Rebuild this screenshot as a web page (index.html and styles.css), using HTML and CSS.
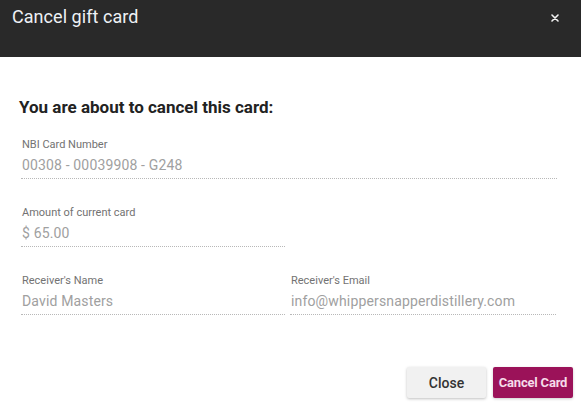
FILE: index.html
```html
<!DOCTYPE html>
<html>
<head>
<meta charset="utf-8">
<link rel="stylesheet" href="styles.css">
</head>
<body>
<div class="dialog">
  <div class="header">
    <div class="title">Cancel gift card</div>
    <button class="x" aria-label="Close">
      <svg width="8" height="8" viewBox="0 0 8 8"><path d="M1 1L7 7M7 1L1 7" stroke="#f2f2f2" stroke-width="1.6" stroke-linecap="round"/></svg>
    </button>
  </div>
  <div class="content">
    <h2 class="heading">You are about to cancel this card:</h2>
    <div class="fields">
      <div class="field full">
        <div class="label">NBI Card Number</div>
        <div class="value">00308 - 00039908 - G248</div>
      </div>
      <div class="row">
        <div class="field">
          <div class="label">Amount of current card</div>
          <div class="value">$ 65.00</div>
        </div>
      </div>
      <div class="row">
        <div class="field">
          <div class="label">Receiver's Name</div>
          <div class="value">David Masters</div>
        </div>
        <div class="field">
          <div class="label">Receiver's Email</div>
          <div class="value">info@whippersnapperdistillery.com</div>
        </div>
      </div>
    </div>
  </div>
  <div class="actions">
    <button class="btn close">Close</button>
    <button class="btn danger">Cancel Card</button>
  </div>
</div>
</body>
</html>
```

FILE: styles.css
```css
* { box-sizing: border-box; }
html, body { margin: 0; padding: 0; background: #fff; }
body { font-family: Roboto, "Noto Sans", sans-serif; width: 581px; height: 404px; overflow: hidden; }
.dialog { display: flex; flex-direction: column; height: 404px; }
.header {
  height: 57px;
  background: #292929;
  display: flex;
  align-items: flex-start;
  justify-content: space-between;
  padding: 6px 21px 0 12px;
}
.title { color: #eef1f5; font-size: 18px; line-height: 21px; letter-spacing: 0.05px; }
.x {
  background: none; border: 0; padding: 0; margin-top: 7px;
  width: 10px; height: 10px; display: flex; align-items: center; justify-content: center;
}
.content { padding: 40px 24px 0 19px; }
.heading { margin: 0; font-size: 17px; line-height: 20px; font-weight: 700; color: #222; }
.fields { padding-left: 2px; margin-top: 21px; display: flex; flex-direction: column; gap: 27px; }
.row { display: grid; grid-template-columns: 264px 266px; column-gap: 5px; }
.field { border-bottom: 1px dotted #b8b8b8; padding-left: 1px; }
.label { font-size: 11px; line-height: 13px; color: #727272; margin-bottom: 6px; }
.value { font-size: 14px; line-height: 17px; color: #a0a0a0; padding-bottom: 4px; letter-spacing: 0.15px; }
.actions { margin-top: auto; display: flex; justify-content: flex-end; gap: 7px; padding: 0 8px 6px 0; }
.btn {
  height: 31px; border: 0; border-radius: 2px; font-family: Roboto, sans-serif; font-size: 14px;
  padding: 0; white-space: nowrap;
}
.close { width: 79px; background: #f1f1f1; color: #333; font-weight: 500; box-shadow: 0 1px 3px rgba(0,0,0,0.25); }
.danger { width: 80px; background: #9b1259; color: #f6dbe9; font-weight: 700; font-size: 13px; letter-spacing: -0.2px; box-shadow: 0 1px 3px rgba(0,0,0,0.2); }
```
